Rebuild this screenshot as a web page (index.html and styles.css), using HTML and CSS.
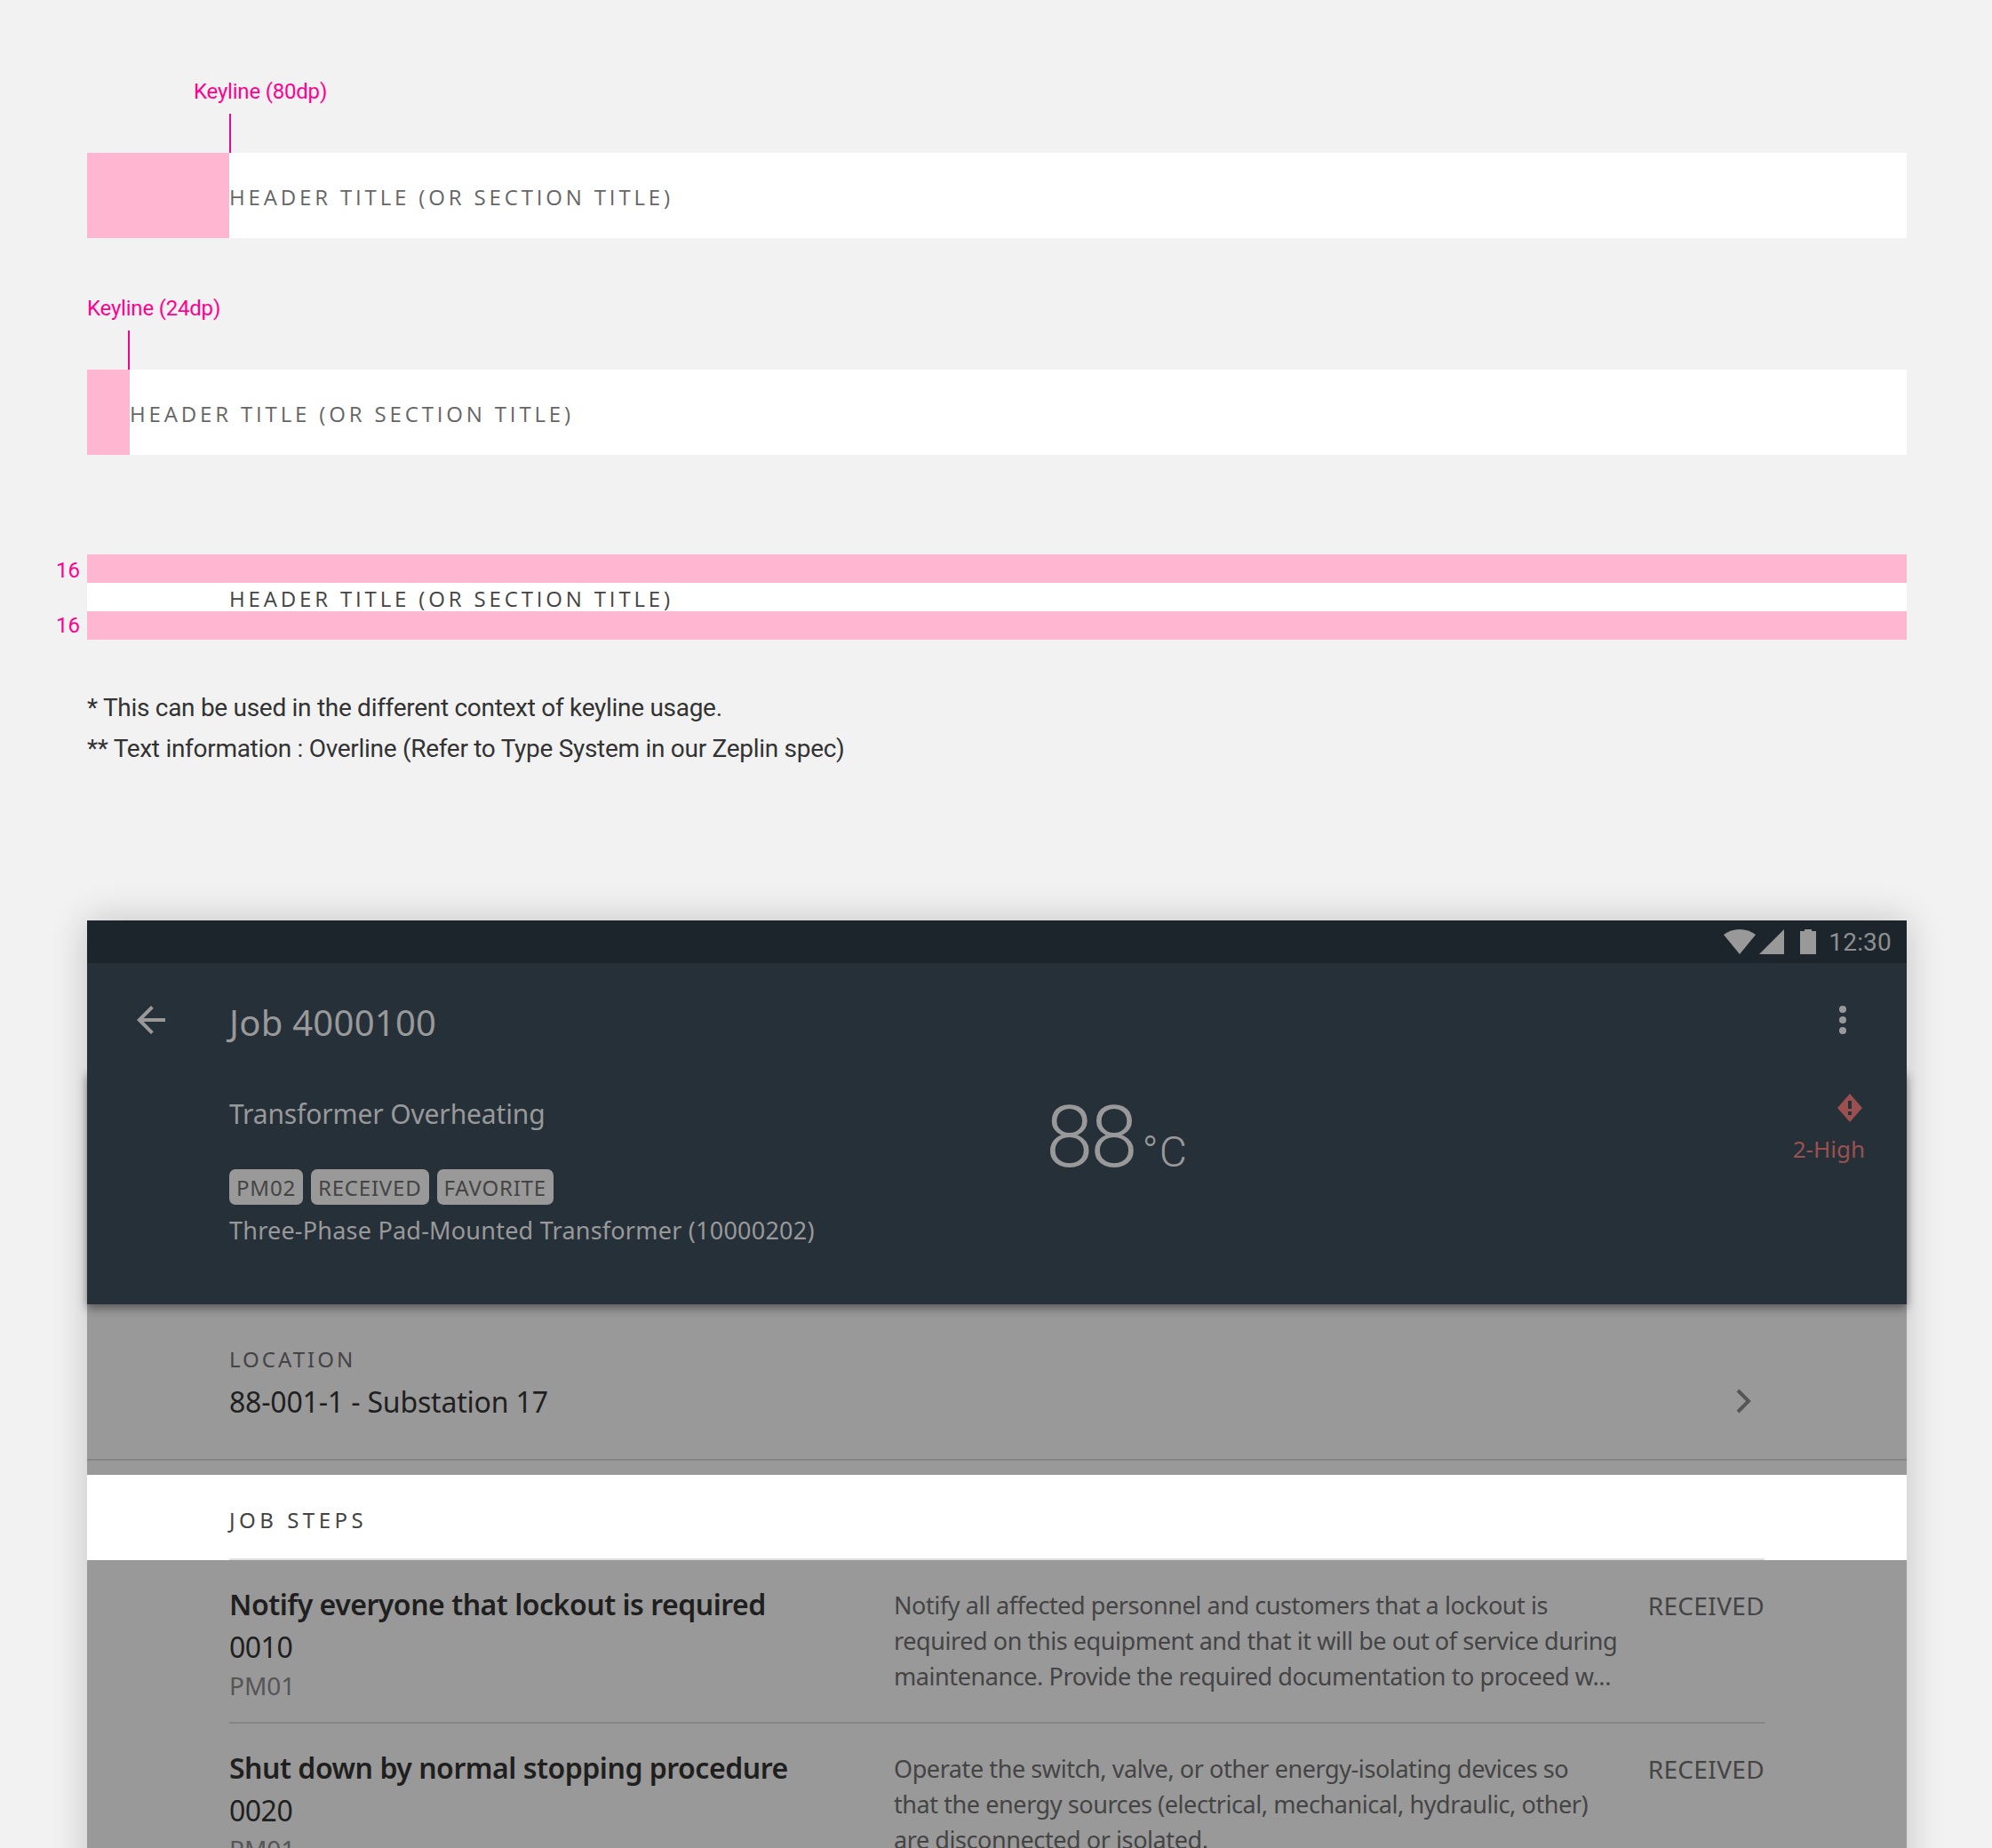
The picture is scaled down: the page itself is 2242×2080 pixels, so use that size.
FILE: index.html
```html
<!DOCTYPE html>
<html lang="en">
<head>
  <meta charset="UTF-8" />
  <title>Section header keylines</title>
  <link rel="stylesheet" href="styles.css">
</head>
<body>

<div class="spec">
  <div class="key-label key-label-80">Keyline (80dp)</div>
  <div class="tick tick-80"></div>
  <div class="key-bar">
    <div class="key-pink key-pink-80"></div>
    <div class="overline">HEADER TITLE (OR SECTION TITLE)</div>
  </div>

  <div class="key-label key-label-24">Keyline (24dp)</div>
  <div class="tick tick-24"></div>
  <div class="key-bar">
    <div class="key-pink key-pink-24"></div>
    <div class="overline">HEADER TITLE (OR SECTION TITLE)</div>
  </div>

  <div class="pad-spec">
    <div class="pad-num">16</div>
    <div class="pad-pink"></div>
    <div></div>
    <div class="pad-text"><div class="overline">HEADER TITLE (OR SECTION TITLE)</div></div>
    <div class="pad-num pad-num-low">16</div>
    <div class="pad-pink"></div>
  </div>

  <div class="notes">
    <div>* This can be used in the different context of keyline usage.</div>
    <div>** Text information : Overline (Refer to Type System in our Zeplin spec)</div>
  </div>
</div>

<div class="phone">
  <div class="status-bar">
    <svg class="status-icons" width="104" height="28" viewBox="0 0 104 28">
      <path d="M0 6 C10 -2 26 -2 36 6 L18 28 Z" />
      <path d="M40 28 L68 0 V28 Z" />
      <path d="M86 2 H91 V0 H99 V2 H104 V28 H86 Z" />
    </svg>
    <span class="clock">12:30</span>
  </div>

  <div class="app-header">
    <div class="toolbar">
      <svg class="back-icon" width="48" height="48" viewBox="0 0 24 24">
        <path d="M20 11H7.83l5.59-5.59L12 4l-8 8 8 8 1.41-1.41L7.83 13H20v-2z" />
      </svg>
      <div class="job-title">Job 4000100</div>
      <svg class="more-icon" width="8" height="32" viewBox="0 0 8 32">
        <circle cx="4" cy="4" r="4" />
        <circle cx="4" cy="16" r="4" />
        <circle cx="4" cy="28" r="4" />
      </svg>
    </div>
    <div class="job-info">
      <div class="job-main">
        <div class="job-name">Transformer Overheating</div>
        <div class="chips">
          <span class="chip">PM02</span>
          <span class="chip">RECEIVED</span>
          <span class="chip">FAVORITE</span>
        </div>
        <div class="equipment">Three-Phase Pad-Mounted Transformer (10000202)</div>
      </div>
      <div class="temp"><span class="temp-val">88</span><span class="temp-unit">°C</span></div>
      <div class="priority">
        <svg class="priority-icon" width="28" height="32" viewBox="0 0 28 32">
          <path fill-rule="evenodd" d="M14 0 L28 16 L14 32 L0 16 Z M12 8 V17 H16 V8 Z M12 20 V24 H16 V20 Z" />
        </svg>
        <div class="priority-text">2-High</div>
      </div>
    </div>
  </div>

  <div class="location">
    <div class="location-inner">
      <div class="section-label">LOCATION</div>
      <div class="location-row">
        <div class="location-val">88-001-1 - Substation 17</div>
        <svg class="chevron" width="20" height="28" viewBox="0 0 20 28">
          <path d="M3 2 L15 14 L3 26" />
        </svg>
      </div>
    </div>
  </div>

  <div class="steps-head">
    <div class="steps-head-inner">
      <div class="section-label section-label-wide">JOB STEPS</div>
    </div>
  </div>

  <div class="steps">
    <div class="step">
      <div class="step-main">
        <div class="step-title">Notify everyone that lockout is required</div>
        <div class="step-num">0010</div>
        <div class="step-type">PM01</div>
      </div>
      <div class="step-desc">Notify all affected personnel and customers that a lockout is<br>required on this equipment and that it will be out of service during<br>maintenance. Provide the required documentation to proceed w...</div>
      <div class="step-status">RECEIVED</div>
    </div>
    <div class="step">
      <div class="step-main">
        <div class="step-title">Shut down by normal stopping procedure</div>
        <div class="step-num">0020</div>
        <div class="step-type">PM01</div>
      </div>
      <div class="step-desc">Operate the switch, valve, or other energy-isolating devices so<br>that the energy sources (electrical, mechanical, hydraulic, other)<br>are disconnected or isolated.</div>
      <div class="step-status">RECEIVED</div>
    </div>
  </div>
</div>

</body>
</html>
```

FILE: styles.css
```css
* { box-sizing: border-box; }

body {
  margin: 0; background: #f2f2f2; color: #333;
  font-family: 'Noto Sans', sans-serif;
  height: 2080px; overflow: hidden;
  padding: 0 96px 0 98px;
}

/* spec part */
.spec { padding-top: 87px; }

.key-label {
  font-family: Roboto, sans-serif;
  font-size: 24px; line-height: 32px; color: #ff0090;
  letter-spacing: -0.2px;
}
.key-label-80 { margin-left: 120px; }
.key-label-24 { margin-top: 63px; }

.tick {
  width: 2px; height: 44px; background: #f0068e;
  margin-top: 9px;
}
.tick-80 { margin-left: 160px; }
.tick-24 { margin-left: 46px; }

.key-bar {
  display: flex; align-items: center;
  height: 96px; background: #fff;
}
.key-pink { height: 100%; background: #ffb6d1; }
.key-pink-80 { width: 160px; }
.key-pink-24 { width: 48px; }

.overline {
  font-family: 'Open Sans', sans-serif;
  font-size: 24px; line-height: 32px;
  letter-spacing: 3.85px; color: #666;
  padding-top: 4px;
}

.pad-spec {
  display: grid; grid-template-columns: 40px 1fr;
  grid-template-rows: 32px 32px 32px;
  margin: 112px 0 0 -40px;
}
.pad-num {
  font-family: Roboto, sans-serif;
  font-size: 24px; line-height: 32px; color: #ff0090;
  text-align: right; padding-right: 8px; padding-top: 2px;
}
.pad-num-low { padding-top: 0; }
.pad-pink { background: #ffb6d1; }
.pad-text { background: #fff; padding-left: 160px; }
.pad-text .overline { color: #444; padding-top: 2px; }

.notes {
  margin-top: 54px;
  font-family: Roboto, sans-serif;
  font-size: 28px; line-height: 46px; color: #333;
  letter-spacing: -0.29px;
}

/* phone part */
.phone {
  margin-top: 170px; background: #999;
  box-shadow: 0 0 40px rgba(0,0,0,0.2);
}

.status-bar {
  display: flex; justify-content: flex-end; align-items: center;
  height: 48px; background: #1c252c; padding-right: 17px;
}
.status-icons { fill: #999; }
.clock {
  font-family: Roboto, sans-serif;
  font-size: 28px; color: #8f8f8f; margin-left: 14px;
  letter-spacing: 0.2px;
}

.app-header { background: #263039; }

.toolbar {
  display: flex; align-items: flex-start;
  height: 122px; padding: 40px 0 0 48px;
  background: #263039; position: relative; z-index: 1;
}
.back-icon { fill: #999; }
.job-title {
  font-size: 40px; line-height: 48px; color: #999;
  margin: 3px 0 0 64px; flex: 1; letter-spacing: 0.27px;
}
.more-icon { fill: #999; margin: 8px 68px 0 0; }

.job-info {
  display: flex; height: 262px;
  background: #263039; padding: 26px 47px 0 160px;
  box-shadow: 0 4px 10px rgba(0,0,0,0.45);
  position: relative;
}
.job-main { width: 919px; }
.job-name { font-size: 30px; line-height: 44px; color: #999; letter-spacing: -0.13px; }

.chips { display: flex; gap: 9px; margin-top: 40px; }
.chip {
  height: 40px; padding: 0 8px;
  background: #999; color: #444; border-radius: 7px;
  font-size: 24px; line-height: 42px; letter-spacing: 0.8px;
}
.equipment {
  font-size: 27px; line-height: 40px; color: #999;
  margin-top: 9px; letter-spacing: 0.22px;
}

.temp { color: #999; font-family: Roboto, sans-serif; font-weight: 300; margin-top: -8px; }
.temp-val { font-size: 96px; line-height: 112px; letter-spacing: -3px; }
.temp-unit { font-size: 48px; margin-left: 8px; letter-spacing: 1px; }

.priority {
  margin: -1px 0 0 auto; display: flex; flex-direction: column; align-items: flex-end;
  color: #9b5050;
}
.priority-icon { fill: #9b5050; margin-right: 3px; }
.priority-text { font-size: 26px; line-height: 40px; margin-top: 10px; }

.location { height: 192px; padding-bottom: 16px; }
.location-inner {
  height: 176px; padding: 46px 0 0 160px;
  border-bottom: 2px solid #858585;
}
.section-label {
  font-size: 24px; line-height: 32px;
  letter-spacing: 3px; color: #444;
}
.section-label-wide { letter-spacing: 4.5px; padding-top: 1px; }
.location-row {
  display: flex; justify-content: space-between; align-items: center;
  margin-top: 10px; padding-right: 173px;
}
.location-val { font-size: 32px; line-height: 44px; color: #1f1f1f; letter-spacing: -0.18px; }
.chevron { fill: none; stroke: #555; stroke-width: 4; margin-top: -2px; }

.steps-head { background: #fff; height: 96px; padding: 0 160px; }
.steps-head-inner {
  height: 96px; padding-top: 34px;
  border-bottom: 2px solid #e0e0e0;
}

.steps { padding: 0 160px; }
.step {
  display: flex; height: 184px; padding-top: 28px;
  border-bottom: 2px solid #858585;
}
.step-main { flex: 0 0 748px; }
.step-title {
  font-size: 32px; line-height: 44px; font-weight: 600; color: #1f1f1f;
  letter-spacing: -0.48px;
}
.step-num { font-size: 32px; line-height: 44px; margin-top: 4px; color: #1f1f1f; letter-spacing: -0.5px; }
.step-type { font-size: 28px; line-height: 40px; margin-top: 1px; color: #555; }
.step-desc {
  flex: 1; white-space: nowrap; margin-top: 3px;
  font-size: 27px; line-height: 40px; color: #444; letter-spacing: -0.42px;
}
.step-status {
  font-size: 28px; line-height: 40px; margin-top: 3px; color: #444;
  letter-spacing: 0.35px;
}
```
